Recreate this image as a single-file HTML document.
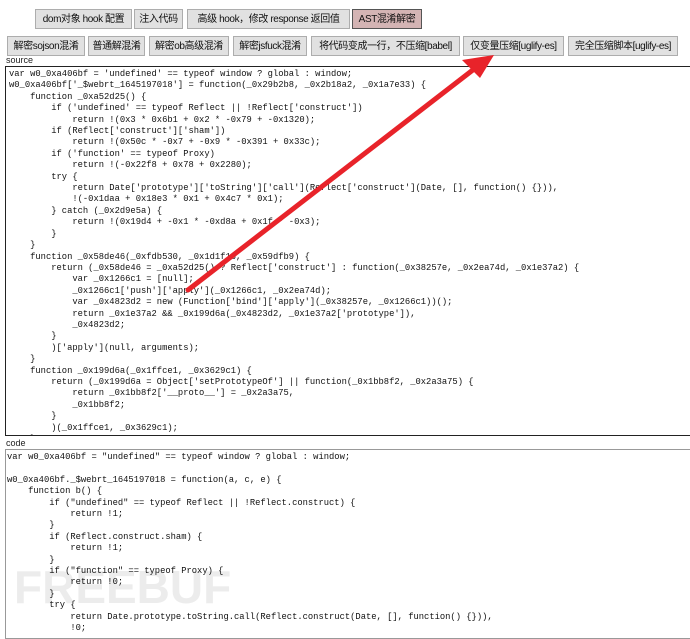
<!DOCTYPE html>
<html><head><meta charset="utf-8"><style>
body{margin:0;width:690px;height:625px;overflow:hidden;background:#fff;position:relative;font-family:"Liberation Sans","Noto Sans CJK SC",sans-serif}
.b{position:absolute;height:20px;border:1px solid #adadad;background:#e1e1e1;font-size:10px;line-height:19px;text-align:center;color:#111;box-sizing:border-box;white-space:nowrap;overflow:hidden;letter-spacing:-0.4px}
.lbl{position:absolute;left:6px;font-size:9px;color:#222}
pre{position:absolute;margin:0;font-family:"Liberation Mono","Noto Sans CJK SC",monospace;font-size:8.8px;line-height:11.4px;color:#111;overflow:hidden;box-sizing:border-box}
</style></head><body>
<div class="b" style="left:35px;top:9px;width:97px">dom对象 hook 配置</div>
<div class="b" style="left:134px;top:9px;width:49px">注入代码</div>
<div class="b" style="left:187px;top:9px;width:163px">高级 hook，修改 response 返回值</div>
<div class="b" style="left:352px;top:9px;width:70px;background:#d4b4b4;border-color:#555">AST混淆解密</div>

<div class="b" style="left:7px;top:36px;width:78px">解密sojson混淆</div>
<div class="b" style="left:88px;top:36px;width:57px">普通解混淆</div>
<div class="b" style="left:149px;top:36px;width:80px">解密ob高级混淆</div>
<div class="b" style="left:233px;top:36px;width:74px">解密jsfuck混淆</div>
<div class="b" style="left:311px;top:36px;width:149px">将代码变成一行，不压缩[babel]</div>
<div class="b" style="left:463px;top:36px;width:101px">仅变量压缩[uglify-es]</div>
<div class="b" style="left:568px;top:36px;width:110px">完全压缩脚本[uglify-es]</div>

<div class="lbl" style="top:55px">source</div>
<pre style="left:5px;top:66px;width:690px;height:370px;border:1px solid #222;border-right:none;padding:2px 3px">var w0_0xa406bf = 'undefined' == typeof window ? global : window;
w0_0xa406bf['_$webrt_1645197018'] = function(_0x29b2b8, _0x2b18a2, _0x1a7e33) {
    function _0xa52d25() {
        if ('undefined' == typeof Reflect || !Reflect['construct'])
            return !(0x3 * 0x6b1 + 0x2 * -0x79 + -0x1320);
        if (Reflect['construct']['sham'])
            return !(0x50c * -0x7 + -0x9 * -0x391 + 0x33c);
        if ('function' == typeof Proxy)
            return !(-0x22f8 + 0x78 + 0x2280);
        try {
            return Date['prototype']['toString']['call'](Reflect['construct'](Date, [], function() {})),
            !(-0x1daa + 0x18e3 * 0x1 + 0x4c7 * 0x1);
        } catch (_0x2d9e5a) {
            return !(0x19d4 + -0x1 * -0xd8a + 0x1f * -0x3);
        }
    }
    function _0x58de46(_0xfdb530, _0x1d1f16, _0x59dfb9) {
        return (_0x58de46 = _0xa52d25() ? Reflect['construct'] : function(_0x38257e, _0x2ea74d, _0x1e37a2) {
            var _0x1266c1 = [null];
            _0x1266c1['push']['apply'](_0x1266c1, _0x2ea74d);
            var _0x4823d2 = new (Function['bind']['apply'](_0x38257e, _0x1266c1))();
            return _0x1e37a2 &amp;&amp; _0x199d6a(_0x4823d2, _0x1e37a2['prototype']),
            _0x4823d2;
        }
        )['apply'](null, arguments);
    }
    function _0x199d6a(_0x1ffce1, _0x3629c1) {
        return (_0x199d6a = Object['setPrototypeOf'] || function(_0x1bb8f2, _0x2a3a75) {
            return _0x1bb8f2['__proto__'] = _0x2a3a75,
            _0x1bb8f2;
        }
        )(_0x1ffce1, _0x3629c1);
    }</pre>
<div class="lbl" style="top:438px">code</div>
<div style="position:absolute;left:14px;top:560px;font:bold 46px 'Liberation Sans',sans-serif;color:#ececec;letter-spacing:0px">FREEBUF</div>
<pre style="left:5px;top:449px;width:690px;height:190px;border:1px solid #999;border-right:none;padding:2px 1px">var w0_0xa406bf = "undefined" == typeof window ? global : window;

w0_0xa406bf._$webrt_1645197018 = function(a, c, e) {
    function b() {
        if ("undefined" == typeof Reflect || !Reflect.construct) {
            return !1;
        }
        if (Reflect.construct.sham) {
            return !1;
        }
        if ("function" == typeof Proxy) {
            return !0;
        }
        try {
            return Date.prototype.toString.call(Reflect.construct(Date, [], function() {})),
            !0;</pre>
<svg style="position:absolute;left:0;top:0" width="690" height="625">
<line x1="188" y1="290" x2="478" y2="66" stroke="#e8232a" stroke-width="5" stroke-linecap="round"/>
<polygon points="494,55 462,60 480,78" fill="#e8232a"/>
</svg>
</body></html>
